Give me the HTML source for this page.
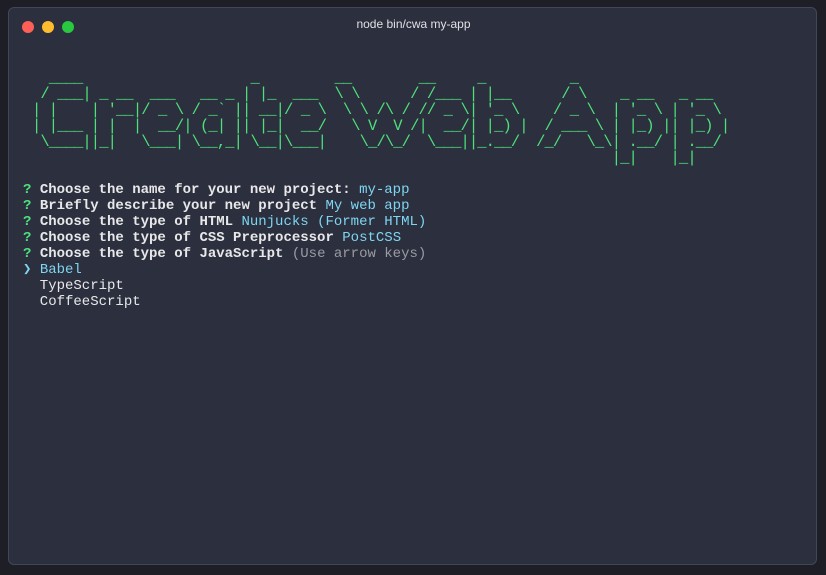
<!DOCTYPE html>
<html><head><meta charset="utf-8"><style>
html,body{margin:0;padding:0;width:826px;height:575px;background:#1d1e26;overflow:hidden}
.win{position:absolute;left:8px;top:7px;width:809px;height:558px;background:#2c2f3d;border:1px solid #42465a;border-radius:6px;box-sizing:border-box;overflow:hidden}
.dot{position:absolute;top:13px;width:12px;height:12px;border-radius:50%}
.title{position:absolute;top:9px;left:0;width:809px;text-align:center;font:12px "Liberation Sans",sans-serif;color:#e0e0e4}
pre{margin:0;font-family:"Liberation Mono",monospace;font-size:14px;line-height:16px;position:absolute;white-space:pre}
.art{left:23px;top:62px;color:#4ee07b;font-size:15.5px;letter-spacing:-0.9px}
.txt{left:14px;top:174px;color:#e8e8ea}
.b{font-weight:bold}
.g{color:#4ee07b;font-weight:bold}
.c{color:#7ed6f2}
.gr{color:#9a9ca4}
</style></head><body>
<div class="win">
<div class="dot" style="left:13px;background:#fe5f57"></div>
<div class="dot" style="left:33px;background:#febc2e"></div>
<div class="dot" style="left:53px;background:#28c840"></div>
<div class="title">node bin/cwa my-app</div>
<pre class="art">  ____                    _         __        __     _          _
 / ___| _ __  ___   __ _ | |_  ___  \ \      / /___ | |__      / \    _ __   _ __
| |    | '__|/ _ \ / _` || __|/ _ \  \ \ /\ / // _ \| '_ \    / _ \  | '_ \ | '_ \
| |___ | |  |  __/| (_| || |_|  __/   \ V  V /|  __/| |_) |  / ___ \ | |_) || |_) |
 \____||_|   \___| \__,_| \__|\___|    \_/\_/  \___||_.__/  /_/   \_\| .__/ | .__/
                                                                     |_|    |_|</pre>
<pre class="txt"><span class="g">?</span> <span class="b">Choose the name for your new project:</span> <span class="c">my-app</span>
<span class="g">?</span> <span class="b">Briefly describe your new project</span> <span class="c">My web app</span>
<span class="g">?</span> <span class="b">Choose the type of HTML</span> <span class="c">Nunjucks (Former HTML)</span>
<span class="g">?</span> <span class="b">Choose the type of CSS Preprocessor</span> <span class="c">PostCSS</span>
<span class="g">?</span> <span class="b">Choose the type of JavaScript</span> <span class="gr">(Use arrow keys)</span>
<span class="c">❯ Babel</span>
  TypeScript
  CoffeeScript</pre>
</div>
</body></html>
